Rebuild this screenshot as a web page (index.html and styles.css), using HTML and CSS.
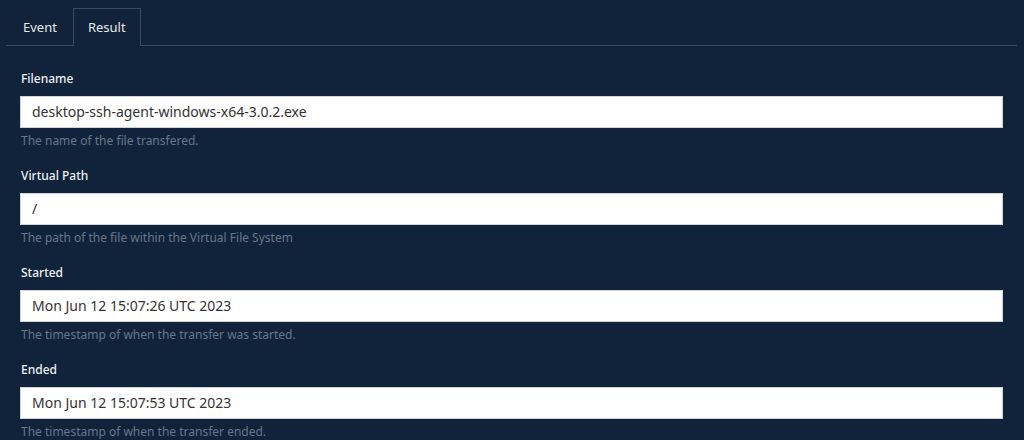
FILE: index.html
```html
<!DOCTYPE html>
<html>
<head>
<meta charset="utf-8">
<link rel="stylesheet" href="styles.css">
</head>
<body>
<div class="panel">
  <div class="tabs">
    <div class="tab">Event</div>
    <div class="tab active">Result</div>
  </div>
  <div class="content">
    <div class="field">
      <label class="label">Filename</label>
      <div class="input">desktop-ssh-agent-windows-x64-3.0.2.exe</div>
      <div class="help">The name of the file transfered.</div>
    </div>
    <div class="field">
      <label class="label">Virtual Path</label>
      <div class="input">/</div>
      <div class="help">The path of the file within the Virtual File System</div>
    </div>
    <div class="field">
      <label class="label">Started</label>
      <div class="input">Mon Jun 12 15:07:26 UTC 2023</div>
      <div class="help">The timestamp of when the transfer was started.</div>
    </div>
    <div class="field">
      <label class="label">Ended</label>
      <div class="input">Mon Jun 12 15:07:53 UTC 2023</div>
      <div class="help">The timestamp of when the transfer ended.</div>
    </div>
  </div>
</div>
</body>
</html>
```

FILE: styles.css
```css
html, body {
  margin: 0;
  padding: 0;
  background: #10233a;
  height: 100%;
  overflow: hidden;
}
body {
  font-family: "Noto Sans", "Open Sans", sans-serif;
}
.panel {
  margin: 0 7px 0 6px;
  padding-top: 8px;
}
.tabs {
  display: flex;
  border-bottom: 1px solid #3a4b5c;
  height: 37px;
}
.tab {
  padding: 0 15px 0 16px;
  line-height: 37px;
  height: 37px;
  font-size: 13px;
  color: #e6e9ec;
  border: 1px solid transparent;
  border-bottom: none;
  box-sizing: border-box;
}
.tab.active {
  border-color: #3a4b5c;
  height: 38px;
  margin-bottom: -1px;
  background: #10233a;
  line-height: 36px;
  padding: 0 14px;
}
.content {
  padding: 25px 14px 0 14px;
  display: flex;
  flex-direction: column;
  gap: 19px;
}
.field {
  display: flex;
  flex-direction: column;
}
.label {
  font-size: 12px;
  font-weight: 500;
  color: #eef0f2;
  line-height: 16px;
  margin-bottom: 9px;
  padding-left: 1px;
}
.input {
  background: #fff;
  border: 1px solid #d0d4d8;
  height: 32px;
  box-sizing: border-box;
  padding: 0 11px;
  line-height: 30px;
  font-size: 14px;
  color: #333;
}
.help {
  font-size: 12px;
  color: #66778a;
  line-height: 16px;
  margin-top: 5px;
  padding-left: 1px;
}
```
